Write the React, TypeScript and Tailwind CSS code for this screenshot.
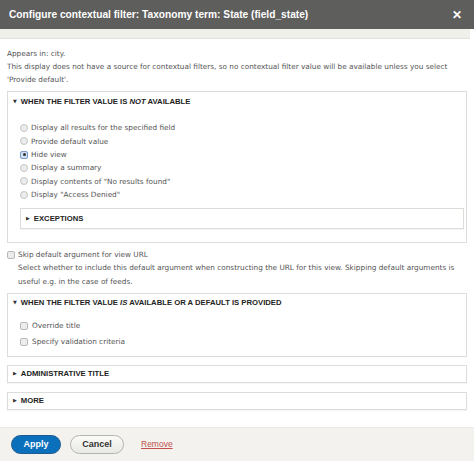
import React from "react";

const body = "font-['DejaVu_Sans',sans-serif]";
const head = "font-['Liberation_Sans',Arial,sans-serif]";

function Radio({ checked, label }: { checked?: boolean; label: string }) {
  return (
    <div className="flex items-center gap-[3px] h-[13.3px]">
      <span
        className={
          "w-[8px] h-[8px] border flex items-center justify-center " +
          (checked
            ? "border-[#7a9cc6] bg-[#cfe0f5] rounded-[2px]"
            : "border-[#c4c4c4] bg-[#ececec] rounded-full")
        }
      >
        {checked && <span className="w-[3px] h-[3px] rounded-full bg-[#333]" />}
      </span>
      <span>{label}</span>
    </div>
  );
}

function Check({ label }: { label: string }) {
  return (
    <div className="flex items-center gap-[4px] h-[16px]">
      <span className="w-[8px] h-[8px] rounded-[2px] border border-[#b9b9b9] bg-[#ececec]" />
      <span>{label}</span>
    </div>
  );
}

function Legend({ open, children }: { open?: boolean; children: React.ReactNode }) {
  return (
    <>
      <span className="text-[5px] text-[#333] mr-[4px]">{open ? "▼" : "▶"}</span>
      <span className={head + " font-bold text-[7.7px] text-[#222]"}>{children}</span>
    </>
  );
}

function Collapsed({ title, h }: { title: string; h: string }) {
  return (
    <div className={"border border-[#dcdcd8] bg-white flex items-center pl-[5px] shadow-[0_1px_1px_rgba(0,0,0,0.04)] " + h}>
      <Legend>{title}</Legend>
    </div>
  );
}

export default function App() {
  return (
    <div className={"w-[474px] h-[461px] bg-white overflow-hidden flex flex-col " + body}>
      {/* title bar */}
      <div className="h-[29px] shrink-0 bg-[#5e5e5c] flex items-center justify-between pl-[9px] pr-[12px]">
        <span className={head + " text-white font-bold text-[10.2px]"}>
          Configure contextual filter: Taxonomy term: State (field_state)
        </span>
        <span className={head + " text-white font-bold text-[12px]"}>✕</span>
      </div>
      <div className="h-[10px] shrink-0 bg-[#f0f0ea] border-b border-[#e2e2dc] mr-[4px]" />

      <div className="flex-1 px-[7px] pt-[7.5px] text-[7.3px] text-[#555] leading-[13.3px]">
        <p>Appears in: city.</p>
        <p>
          This display does not have a source for contextual filters, so no contextual filter value will be available unless you select 'Provide default'.
        </p>

        {/* fieldset 1 */}
        <div className="mt-[5px] border border-[#dcdcd8] pb-[13px]">
          <div className="h-[18px] flex items-center pl-[5px]">
            <Legend open>
              WHEN THE FILTER VALUE IS <i>NOT</i> AVAILABLE
            </Legend>
          </div>
          <div className="pl-[12px] pt-[11px]">
            <Radio label="Display all results for the specified field" />
            <Radio label="Provide default value" />
            <Radio checked label="Hide view" />
            <Radio label="Display a summary" />
            <Radio label='Display contents of "No results found"' />
            <Radio label='Display "Access Denied"' />
          </div>
          <div className="mt-[7px] ml-[12px] mr-[2px]">
            <Collapsed title="EXCEPTIONS" h="h-[21px]" />
          </div>
        </div>

        <div className="mt-[5px]">
          <div className="flex items-center gap-[3px] h-[13.3px]">
            <span className="w-[8px] h-[8px] rounded-[2px] border border-[#b9b9b9] bg-[#ececec]" />
            <span>Skip default argument for view URL</span>
          </div>
          <p className="pl-[11px]">
            Select whether to include this default argument when constructing the URL for this view. Skipping default arguments is useful e.g. in the case of feeds.
          </p>
        </div>

        {/* fieldset 2 */}
        <div className="mt-[5px] border border-[#dcdcd8] pb-[6px]">
          <div className="h-[18px] flex items-center pl-[5px]">
            <Legend open>
              WHEN THE FILTER VALUE <i>IS</i> AVAILABLE OR A DEFAULT IS PROVIDED
            </Legend>
          </div>
          <div className="pl-[12px] pt-[6px] flex flex-col">
            <Check label="Override title" />
            <Check label="Specify validation criteria" />
          </div>
        </div>

        <div className="mt-[8px] flex flex-col gap-[9px]">
          <Collapsed title="ADMINISTRATIVE TITLE" h="h-[18px]" />
          <Collapsed title="MORE" h="h-[18px]" />
        </div>
      </div>

      {/* footer */}
      <div className="h-[34px] shrink-0 bg-[#f3f2ee] flex items-center pl-[11px] gap-[9px] border-t border-[#ebeae5]">
        <button className={head + " w-[50px] h-[19px] rounded-full bg-[#0b70bb] text-white font-bold text-[9px] border border-[#1e5c90]"}>
          Apply
        </button>
        <button className={head + " w-[54px] h-[19px] rounded-full bg-gradient-to-b from-[#fbfbfa] to-[#e8e8e4] text-[#333] font-bold text-[9px] border border-[#b4b4b0]"}>
          Cancel
        </button>
        <a className={head + " ml-[8px] text-[8.5px] text-[#c0504d] underline"}>Remove</a>
      </div>
    </div>
  );
}
